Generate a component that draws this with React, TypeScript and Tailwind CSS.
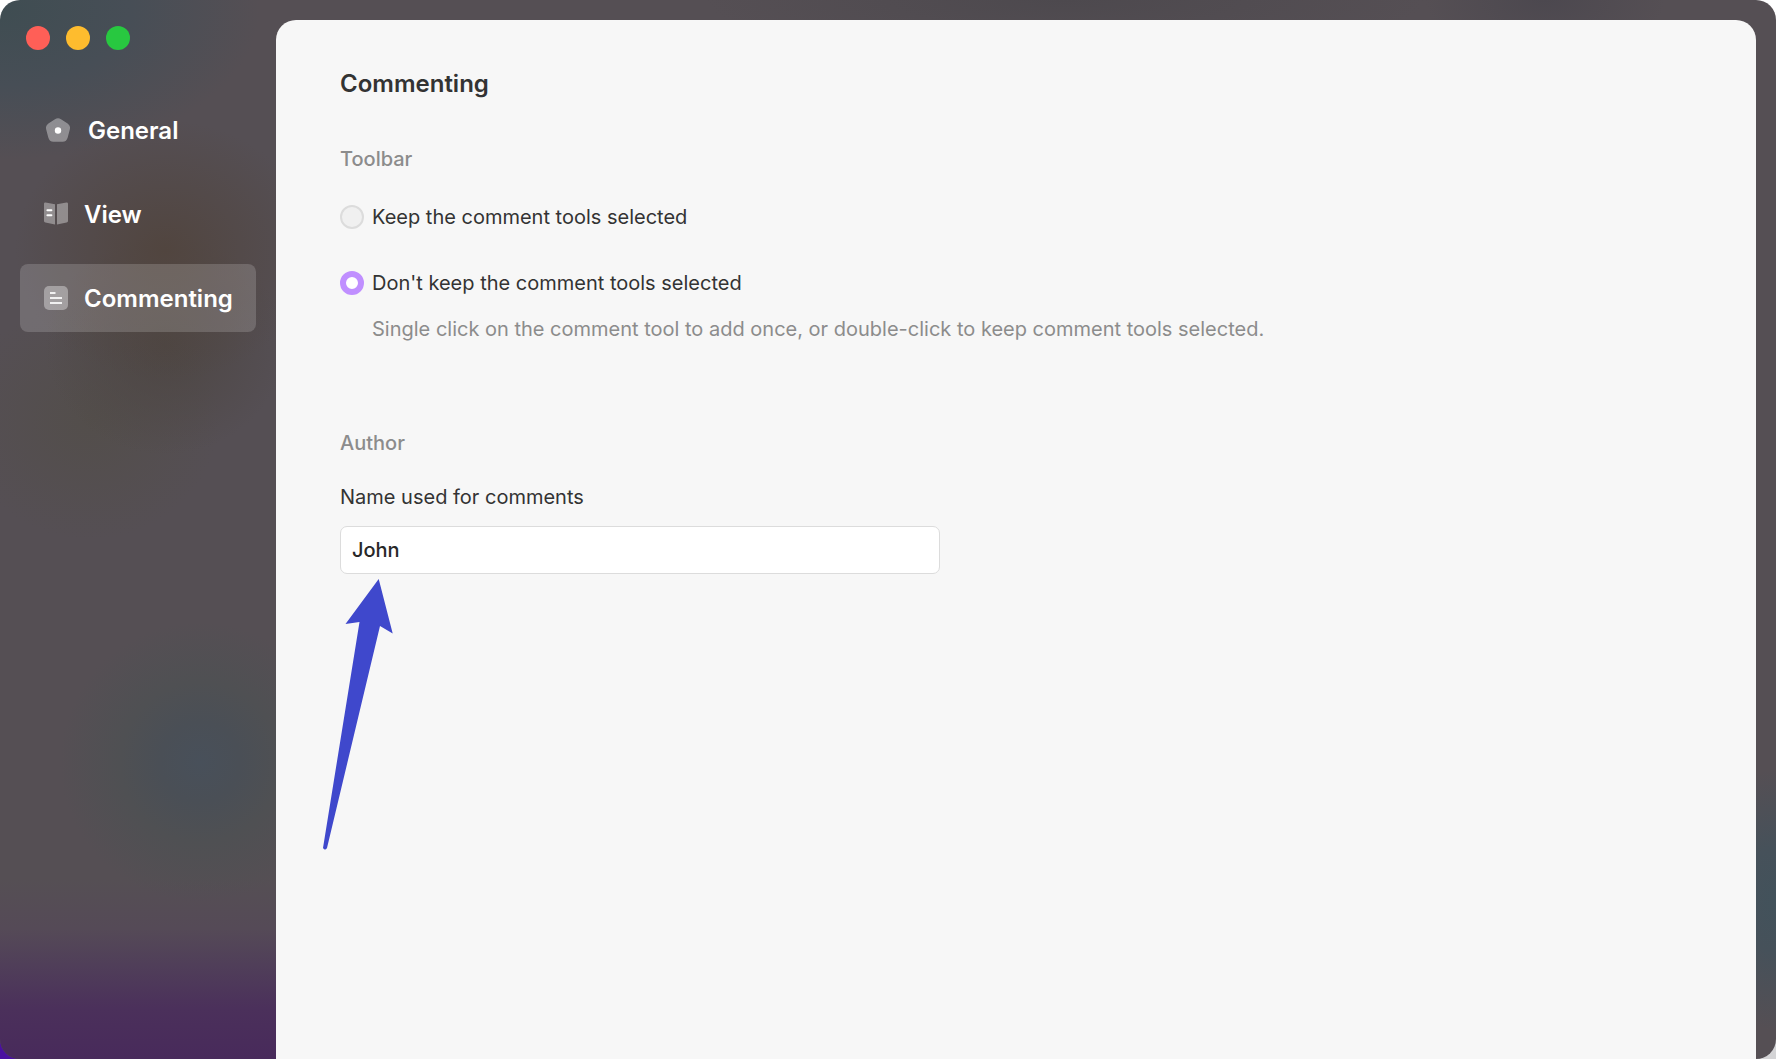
import React, { useState } from 'react';
import clsx from 'clsx';

function GeneralIcon() {
  return (
    <svg className="w-6 h-6" viewBox="0 0 24 24" fill="none" aria-hidden="true">
      <path
        d="M9 1.2Q12 -0.8 15 1.2L21.6 5.4Q24.8 7.6 23.8 11.4L21.7 19.6Q20.6 23.8 16.6 23.8H7.4Q3.4 23.8 2.3 19.6L0.2 11.4Q-0.8 7.6 2.4 5.4Z"
        fill="white"
        fillOpacity="0.36"
      />
      <circle cx="12" cy="12.5" r="3.2" fill="white" />
    </svg>
  );
}

function ViewIcon() {
  return (
    <svg className="w-6 h-6" viewBox="0 0 24 24" fill="none" aria-hidden="true">
      <path
        d="M0 1.8Q0 0.2 1.6 0.4L11 2.2V22.4L1.4 20.6Q0 20.3 0 19ZM24 1.8Q24 0.2 22.4 0.4L13 2.2V22.4L22.6 20.6Q24 20.3 24 19Z"
        fill="white"
        fillOpacity="0.36"
      />
      <path d="M3.4 8.2H7.4M3.4 13.2H7.4" stroke="white" strokeWidth="2" strokeLinecap="round" />
    </svg>
  );
}

function CommentingIcon() {
  return (
    <svg className="w-6 h-6" viewBox="0 0 24 24" fill="none" aria-hidden="true">
      <rect width="24" height="24" rx="5" fill="white" fillOpacity="0.36" />
      <path d="M6 7H11.5M6 12H18M6 17H18" stroke="white" strokeOpacity="0.85" strokeWidth="2" />
    </svg>
  );
}

const navItems = [
  { id: 'general', label: 'General', icon: GeneralIcon, spacing: 'pl-[26px] gap-[18px]' },
  { id: 'view', label: 'View', icon: ViewIcon, spacing: 'pl-6 gap-4' },
  { id: 'commenting', label: 'Commenting', icon: CommentingIcon, spacing: 'pl-6 gap-4' },
];

const toolbarOptions = [
  { id: 'keep', label: 'Keep the comment tools selected' },
  {
    id: 'dont-keep',
    label: "Don't keep the comment tools selected",
    hint: 'Single click on the comment tool to add once, or double-click to keep comment tools selected.',
  },
];

const windowButtons = [
  { label: 'Close', color: 'bg-[#ff5f57]' },
  { label: 'Minimize', color: 'bg-[#febc2e]' },
  { label: 'Zoom', color: 'bg-[#28c840]' },
];

export default function App() {
  const [activeNav, setActiveNav] = useState('commenting');
  const [toolMode, setToolMode] = useState('dont-keep');
  const [author, setAuthor] = useState('John');

  return (
    <div className="min-h-screen flex bg-[linear-gradient(to_right,#4a10a0_50%,#d4d4d6_50%)] bg-[length:100%_40px] bg-bottom bg-no-repeat font-['Inter',sans-serif]">
      <div className="flex-1 flex rounded-[20px] overflow-hidden bg-[#554f54] bg-[radial-gradient(circle_at_200px_762px,#48505a_0,#4a4f56_40px,#4f5053_80px,transparent_140px),radial-gradient(ellipse_260px_150px_at_0_10px,#3f4d52_0,#474e56_50%,transparent),radial-gradient(ellipse_150px_130px_at_165px_250px,#51453f_0,transparent),radial-gradient(ellipse_120px_110px_at_165px_345px,#4d4643_0,transparent),radial-gradient(ellipse_130px_120px_at_90px_420px,#534e4b_0,transparent),radial-gradient(ellipse_90px_130px_at_100%_900px,#42525b_0,#46515a_40%,transparent),radial-gradient(ellipse_120px_60px_at_87%_0,#4c484f_0,transparent),radial-gradient(ellipse_360px_60px_at_60%_0,#4d494e_0,transparent)] bg-no-repeat">
        <aside className="w-[276px] shrink-0 px-5 pt-[26px] bg-[linear-gradient(to_top,#482a5b_0,#4b305b_50px,#503f59_95px,#554a57_130px,transparent_180px)]">
          <div className="flex gap-4 pl-[6px] mb-[46px]">
            {windowButtons.map((button) => (
              <button
                key={button.label}
                aria-label={button.label}
                className={clsx('w-6 h-6 rounded-full', button.color)}
              />
            ))}
          </div>

          <nav className="flex flex-col gap-4">
            {navItems.map((item) => (
              <button
                key={item.id}
                onClick={() => setActiveNav(item.id)}
                className={clsx(
                  'h-[68px] flex items-center rounded-lg text-2xl font-semibold text-white',
                  item.spacing,
                  activeNav === item.id && 'bg-white/17',
                )}
              >
                <item.icon />
                <span className="pt-0.5">{item.label}</span>
              </button>
            ))}
          </nav>
        </aside>

        <main className="flex-1 mt-5 mr-5 px-16 pt-12 rounded-t-[20px] bg-[#f7f7f7] text-xl text-[#333333]">
          <h1 className="text-2xl font-semibold">Commenting</h1>

          <fieldset className="mt-[45px]">
            <legend className="font-medium leading-7 text-[#8c8c8c]">Toolbar</legend>
            <div className="mt-[30px] flex flex-col gap-[38px]">
              {toolbarOptions.map((option) => (
                <div key={option.id}>
                  <label className="flex items-center gap-2 leading-7">
                    <input
                      type="radio"
                      name="toolMode"
                      checked={toolMode === option.id}
                      onChange={() => setToolMode(option.id)}
                      className="appearance-none w-6 h-6 rounded-full border-2 border-[#dcdcdc] bg-[#f0f0f0] checked:border-[6px] checked:border-[#c08fff] checked:bg-white"
                    />
                    {option.label}
                  </label>
                  {option.hint && (
                    <p className="mt-[18px] ml-8 leading-7 text-[#8c8c8c]">{option.hint}</p>
                  )}
                </div>
              ))}
            </div>
          </fieldset>

          <section className="relative mt-[86px]">
            <h2 className="font-medium leading-7 text-[#8c8c8c]">Author</h2>
            <label htmlFor="author" className="block mt-[26px] leading-7">
              Name used for comments
            </label>
            <input
              id="author"
              type="text"
              value={author}
              onChange={(e) => setAuthor(e.target.value)}
              className="block mt-[15px] w-full max-w-[600px] h-12 px-[11px] rounded-[7px] border border-[#dcdcdc] bg-white font-medium text-[#282828] focus:outline-none focus:border-[#c08fff]"
            />
            {/* arrow pointing at the name field */}
            <svg
              className="absolute top-full -left-5 mt-1 w-[76px] h-[276px] pointer-events-none"
              viewBox="0 0 76 276"
              aria-hidden="true"
            >
              <path
                d="M58.7 1L72.7 55.5L60 48L7 270Q5 273 3 270L39.5 44L25.5 46Z"
                fill="#3f48cc"
              />
            </svg>
          </section>
        </main>
      </div>
    </div>
  );
}
